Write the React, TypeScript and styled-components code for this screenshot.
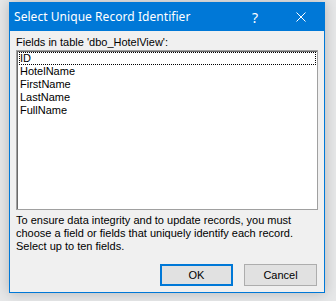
import React from "react";
import styled, { createGlobalStyle } from "styled-components";

const Global = createGlobalStyle`
  html, body { margin: 0; padding: 0; }
  body {
    background: #e6e7e8;
    width: 336px;
    height: 301px;
    overflow: hidden;
  }
`;

const Page = styled.div`
  padding: 2px 0 0 9px;
`;

const Window = styled.div`
  width: 316px;
  height: 291px;
  box-sizing: border-box;
  border: 1px solid #0078d7;
  background: #f0f0f0;
  display: flex;
  flex-direction: column;
  box-shadow: 0 0 12px rgba(0, 0, 0, 0.22);
`;

const TitleBar = styled.div`
  height: 28px;
  background: #0078d7;
  display: flex;
  align-items: center;
  color: #ffffff;
`;

const Title = styled.div`
  flex: 1;
  padding-left: 4px;
  font-family: "Noto Sans", "Open Sans", sans-serif;
  font-size: 12px;
  letter-spacing: 0.05px;
  line-height: 28px;
  white-space: nowrap;
`;

const CaptionButton = styled.div`
  width: 46px;
  height: 28px;
  display: flex;
  align-items: center;
  justify-content: center;
  font-family: "Noto Sans", sans-serif;
  font-size: 14px;
  color: #ffffff;
`;

const Body = styled.div`
  flex: 1;
  display: flex;
  flex-direction: column;
  padding: 4px 6px 6px 6px;
  font-family: "Liberation Sans", Arial, sans-serif;
  font-size: 11px;
  color: #000000;
`;

const Label = styled.div`
  line-height: 13px;
  height: 13px;
  padding-top: 1px;
  margin-bottom: 1px;
`;

const ListBox = styled.div`
  height: 160px;
  box-sizing: border-box;
  background: #ffffff;
  border: 1px solid #a0a0a0;
  box-shadow: inset 1px 1px 0 #696969;
  padding: 1px 1px 0 2px;
  display: flex;
  flex-direction: column;
`;

const Item = styled.div<{ $focused?: boolean }>`
  height: 13px;
  line-height: 13px;
  padding-left: 1px;
  box-sizing: border-box;
  outline: ${(p) => (p.$focused ? "1px dotted #000" : "none")};
  outline-offset: -1px;
  white-space: nowrap;
`;

const Description = styled.div`
  margin-top: 4px;
  line-height: 13px;
  padding-left: 0;
`;

const Buttons = styled.div`
  margin-top: auto;
  display: flex;
  justify-content: flex-end;
  gap: 11px;
  padding-right: 1px;
`;

const Button = styled.div<{ $default?: boolean }>`
  width: 73px;
  height: 22px;
  box-sizing: border-box;
  background: #e1e1e1;
  border: ${(p) => (p.$default ? "2px solid #0078d7" : "1px solid #adadad")};
  display: flex;
  align-items: center;
  justify-content: center;
  font-family: "Liberation Sans", Arial, sans-serif;
  font-size: 11px;
`;

const fields = ["ID", "HotelName", "FirstName", "LastName", "FullName"];

export default function App() {
  return (
    <>
      <Global />
      <Page>
        <Window>
          <TitleBar>
            <Title>Select Unique Record Identifier</Title>
            <CaptionButton>?</CaptionButton>
            <CaptionButton>
              <svg width="10" height="10" viewBox="0 0 10 10">
                <path d="M0.5 0.5 L9.5 9.5 M9.5 0.5 L0.5 9.5" stroke="#fff" strokeWidth="1" />
              </svg>
            </CaptionButton>
          </TitleBar>
          <Body>
            <Label>Fields in table 'dbo_HotelView':</Label>
            <ListBox>
              {fields.map((f, i) => (
                <Item key={f} $focused={i === 0}>
                  {f}
                </Item>
              ))}
            </ListBox>
            <Description>
              To ensure data integrity and to update records, you must
              <br />
              choose a field or fields that uniquely identify each record.
              <br />
              Select up to ten fields.
            </Description>
            <Buttons>
              <Button $default>OK</Button>
              <Button>Cancel</Button>
            </Buttons>
          </Body>
        </Window>
      </Page>
    </>
  );
}
